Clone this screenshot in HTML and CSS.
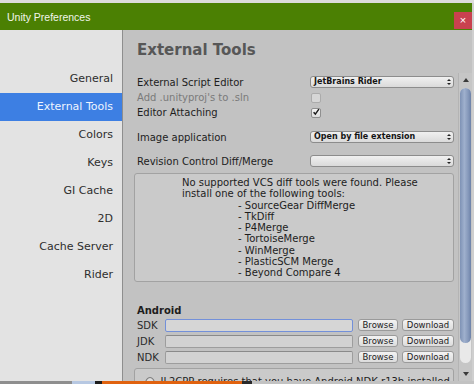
FILE: index.html
```html
<!DOCTYPE html>
<html lang="en">
<head>
    <meta charset="UTF-8">
    <meta name="viewport" content="width=device-width, initial-scale=1.0">
    <title>Unity Preferences</title>
    <link rel="stylesheet" href="styles.css">
</head>
<body>
    <div class="top-strip"></div>

    <div class="window">
        <div class="titlebar">
            <span class="title">Unity Preferences</span>
            <span class="close">&times;</span>
        </div>

        <div class="window-body">
            <nav class="sidebar">
                <div class="nav-item">General</div>
                <div class="nav-item selected">External Tools</div>
                <div class="nav-item">Colors</div>
                <div class="nav-item">Keys</div>
                <div class="nav-item">GI Cache</div>
                <div class="nav-item">2D</div>
                <div class="nav-item">Cache Server</div>
                <div class="nav-item">Rider</div>
            </nav>

            <main class="pane">
                <h1>External Tools</h1>

                <div class="scrollview">
                    <div class="content">
                        <div class="row">
                            <span class="label">External Script Editor</span>
                            <div class="popup">JetBrains Rider<span class="arrows"></span></div>
                        </div>
                        <div class="row row-small">
                            <span class="label disabled">Add .unityproj's to .sln</span>
                            <span class="checkbox disabled"></span>
                        </div>
                        <div class="row row-small">
                            <span class="label">Editor Attaching</span>
                            <span class="checkbox">
                                <svg width="10" height="10" viewBox="0 0 10 10"><path d="M2 5.2 L4.2 7.6 L8.6 1.4" fill="none" stroke="#1b1b1b" stroke-width="1.8"/></svg>
                            </span>
                        </div>
                        <div class="row row-gap">
                            <span class="label">Image application</span>
                            <div class="popup">Open by file extension<span class="arrows"></span></div>
                        </div>
                        <div class="row row-gap">
                            <span class="label">Revision Control Diff/Merge</span>
                            <div class="popup"><span class="arrows"></span></div>
                        </div>

                        <div class="helpbox">
                            <p>No supported VCS diff tools were found. Please</p>
                            <p>install one of the following tools:</p>
                            <p class="indent">- SourceGear DiffMerge</p>
                            <p class="indent">- TkDiff</p>
                            <p class="indent">- P4Merge</p>
                            <p class="indent">- TortoiseMerge</p>
                            <p class="indent">- WinMerge</p>
                            <p class="indent">- PlasticSCM Merge</p>
                            <p class="indent">- Beyond Compare 4</p>
                        </div>

                        <div class="section-title">Android</div>
                        <div class="sdk-row">
                            <span class="label">SDK</span>
                            <span class="field focused"></span>
                            <span class="button">Browse</span>
                            <span class="button">Download</span>
                        </div>
                        <div class="sdk-row">
                            <span class="label">JDK</span>
                            <span class="field"></span>
                            <span class="button">Browse</span>
                            <span class="button">Download</span>
                        </div>
                        <div class="sdk-row">
                            <span class="label">NDK</span>
                            <span class="field"></span>
                            <span class="button">Browse</span>
                            <span class="button">Download</span>
                        </div>

                        <div class="helpbox helpbox-info">
                            <span class="info-icon"></span>
                            <p>IL2CPP requires that you have Android NDK r13b installed.</p>
                        </div>
                    </div>

                    <div class="scrollbar">
                        <div class="sb-btn"><span class="tri-up"></span></div>
                        <div class="sb-track"><div class="sb-thumb"></div></div>
                        <div class="sb-btn"><span class="tri-down"></span></div>
                    </div>
                </div>
            </main>
        </div>
    </div>

    <div class="bottom-strip"></div>
</body>
</html>
```

FILE: styles.css
```css
:root {
    --title-green: #4b8003;
    --close-red: #c9414f;
    --sidebar: #e3e3e3;
    --pane: #c2c2c2;
    --select: #3d7fe3;
    --text: #1d1d1d;
}

body {
    margin: 0;
    width: 474px;
    height: 384px;
    overflow: hidden;
    background-color: #cfcfcf;
    font-family: 'DejaVu Sans', Verdana, sans-serif;
    color: var(--text);
}

.top-strip {
    height: 3px;
    background-color: #dcdcdc;
}

.window {
    width: 472px;
    height: 378px;
    display: flex;
    flex-direction: column;
    overflow: hidden;
}

.titlebar {
    height: 27px;
    flex-shrink: 0;
    background-color: var(--title-green);
    display: flex;
    align-items: center;
    justify-content: space-between;
    padding-left: 7px;
}

.title {
    font-family: 'Liberation Sans', Arial, sans-serif;
    font-size: 10.5px;
    color: #f2f6ec;
}

.close {
    width: 18px;
    height: 17px;
    margin-top: 8px;
    background-color: var(--close-red);
    color: #fff;
    font-family: 'Liberation Sans', Arial, sans-serif;
    font-size: 11px;
    line-height: 17px;
    text-align: center;
}

.window-body {
    flex: 1;
    display: flex;
    min-height: 0;
}

/* left navigation */

.sidebar {
    width: 122px;
    flex-shrink: 0;
    background-color: var(--sidebar);
    border-right: 1px solid #8e8e8e;
    padding-top: 35px;
}

.nav-item {
    height: 28px;
    line-height: 28px;
    text-align: right;
    padding-right: 9px;
    font-size: 11px;
    color: #2e2e2e;
}

.nav-item.selected {
    background-color: var(--select);
    color: #eef4ff;
}

/* right pane */

.pane {
    flex: 1;
    display: flex;
    flex-direction: column;
    background-color: var(--pane);
    min-width: 0;
}

h1 {
    margin: 0;
    height: 43px;
    box-sizing: border-box;
    padding: 10px 0 0 14px;
    font-size: 15px;
    line-height: 20px;
    color: #575757;
}

.scrollview {
    flex: 1;
    display: flex;
    min-height: 0;
}

.content {
    flex: 1;
    padding: 1px 4px 0 14px;
    overflow: hidden;
}

.row {
    display: grid;
    grid-template-columns: 173px 1fr;
    align-items: center;
    height: 16px;
}

.row-small {
    height: 15px;
}

.row-gap {
    margin-top: 9px;
}

.row-gap + .row-gap {
    margin-top: 8px;
}

.label {
    font-size: 10px;
    white-space: nowrap;
}

.label.disabled {
    color: #7a7a7a;
}

.popup {
    position: relative;
    height: 12px;
    box-sizing: border-box;
    border: 1px solid #8c8c8c;
    border-radius: 3px;
    background: linear-gradient(#f0f0f0, #dadada);
    padding-left: 3px;
    font-size: 8px;
    font-weight: bold;
    line-height: 10px;
    color: #151515;
}

.arrows {
    position: absolute;
    right: 4px;
    top: 2px;
    width: 0;
    height: 6px;
}

.arrows::before,
.arrows::after {
    content: "";
    position: absolute;
    left: -2px;
    border-left: 2px solid transparent;
    border-right: 2px solid transparent;
}

.arrows::before {
    top: 0;
    border-bottom: 2.5px solid #222;
}

.arrows::after {
    bottom: 0;
    border-top: 2.5px solid #222;
}

.checkbox {
    width: 10px;
    height: 10px;
    margin-left: 1px;
    box-sizing: border-box;
    border: 1px solid #8f8f8f;
    border-radius: 2px;
    background: linear-gradient(#f4f4f4, #dedede);
    display: flex;
    align-items: center;
    justify-content: center;
}

.checkbox svg {
    margin-top: -2px;
}

.checkbox.disabled {
    border-color: #ababab;
    background: #d6d6d6;
}

.helpbox {
    margin-top: 4px;
    margin-left: -3px;
    border: 1px solid #a2a2a2;
    border-radius: 3px;
    background-color: #cacaca;
    padding: 3px 0 2px 47px;
}

.helpbox p {
    margin: 0;
    font-size: 10px;
    line-height: 11.3px;
    white-space: nowrap;
}

.helpbox .indent {
    padding-left: 56px;
}

.section-title {
    margin-top: 22px;
    font-size: 10px;
    font-weight: bold;
    line-height: 14px;
}

.sdk-row {
    display: grid;
    grid-template-columns: 24px 188px 41px 52px;
    column-gap: 4px;
    align-items: center;
    height: 15px;
    margin-bottom: 1px;
}

.sdk-row .label {
    color: #2a2a2a;
}

.field {
    height: 13px;
    box-sizing: border-box;
    border: 1px solid #9d9d9d;
    border-top-color: #8a8a8a;
    border-radius: 2px;
    background-color: #d2d2d2;
}

.field.focused {
    border-color: #7390d9;
    background-color: #d6d6d6;
}

.button {
    height: 12px;
    margin-left: 1px;
    box-sizing: border-box;
    border: 1px solid #9a9a9a;
    border-radius: 3px;
    background: linear-gradient(#f3f3f3, #dcdcdc);
    font-size: 8.5px;
    line-height: 10px;
    text-align: center;
    color: #222;
}

.sdk-row .button:last-child {
    margin-left: 0;
}

.helpbox-info {
    margin-top: 3px;
    display: flex;
    align-items: flex-start;
    gap: 5px;
    padding: 7px 0 0 10px;
    height: 24px;
}

.info-icon {
    width: 12px;
    height: 12px;
    margin-top: 1px;
    border-radius: 50%;
    border: 1px solid #7c7c7c;
    background-color: #dedede;
}

/* scrollbar */

.scrollbar {
    width: 13px;
    flex-shrink: 0;
    display: flex;
    flex-direction: column;
    background-color: #c6c6c6;
    border-left: 1px solid #b4b4b4;
}

.sb-btn {
    height: 14px;
    display: flex;
    align-items: center;
    justify-content: center;
}

.tri-up {
    border-left: 3px solid transparent;
    border-right: 3px solid transparent;
    border-bottom: 4px solid #3a3a3a;
}

.tri-down {
    border-left: 3px solid transparent;
    border-right: 3px solid transparent;
    border-top: 4px solid #3a3a3a;
}

.sb-track {
    flex: 1;
    margin: 1px 1px 4px 1px;
    border-radius: 6px;
    background-color: #e9e9e9;
}

.sb-thumb {
    height: 255px;
    border-radius: 6px;
    background: linear-gradient(to right, #7e92b5, #9fb0cd 40%, #8598ba 75%, #6d82a8);
}

.bottom-strip {
    height: 3px;
    background: linear-gradient(to right, #8e8e8e 0 72px, #b7c8e2 72px 95px, #1e1e1e 95px 102px, #e0620f 102px 242px, #2a2a2a 242px 252px, #c2c2c2 252px);
}
```
